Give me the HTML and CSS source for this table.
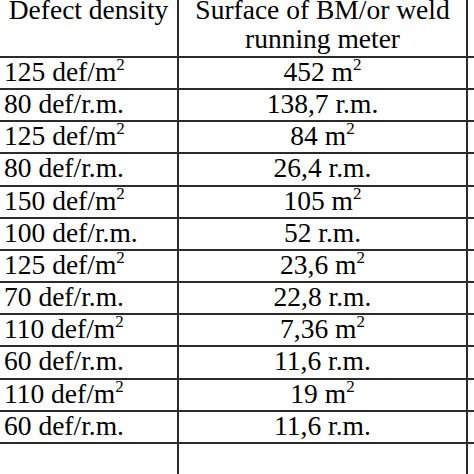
FILE: index.html
```html
<!DOCTYPE html>
<html>
<head>
<meta charset="utf-8">
<link rel="stylesheet" href="styles.css">
</head>
<body>
<div class="sheet">
  <div class="row head">
    <div class="cell c1"><div class="htext">Defect density</div></div>
    <div class="cell c2"><div class="htext">Surface of BM/or weld<br>running meter</div></div>
    <div class="cell c3"></div>
  </div>
  <div class="row"><div class="cell c1">125 def/m<sup>2</sup></div><div class="cell c2">452 m<sup>2</sup></div><div class="cell c3"></div></div>
  <div class="row"><div class="cell c1">80 def/r.m.</div><div class="cell c2">138,7 r.m.</div><div class="cell c3"></div></div>
  <div class="row"><div class="cell c1">125 def/m<sup>2</sup></div><div class="cell c2">84 m<sup>2</sup></div><div class="cell c3"></div></div>
  <div class="row"><div class="cell c1">80 def/r.m.</div><div class="cell c2">26,4 r.m.</div><div class="cell c3"></div></div>
  <div class="row"><div class="cell c1">150 def/m<sup>2</sup></div><div class="cell c2">105 m<sup>2</sup></div><div class="cell c3"></div></div>
  <div class="row"><div class="cell c1">100 def/r.m.</div><div class="cell c2">52 r.m.</div><div class="cell c3"></div></div>
  <div class="row"><div class="cell c1">125 def/m<sup>2</sup></div><div class="cell c2">23,6 m<sup>2</sup></div><div class="cell c3"></div></div>
  <div class="row"><div class="cell c1">70 def/r.m.</div><div class="cell c2">22,8 r.m.</div><div class="cell c3"></div></div>
  <div class="row"><div class="cell c1">110 def/m<sup>2</sup></div><div class="cell c2">7,36 m<sup>2</sup></div><div class="cell c3"></div></div>
  <div class="row"><div class="cell c1">60 def/r.m.</div><div class="cell c2">11,6 r.m.</div><div class="cell c3"></div></div>
  <div class="row"><div class="cell c1">110 def/m<sup>2</sup></div><div class="cell c2">19 m<sup>2</sup></div><div class="cell c3"></div></div>
  <div class="row"><div class="cell c1">60 def/r.m.</div><div class="cell c2">11,6 r.m.</div><div class="cell c3"></div></div>
  <div class="row last"><div class="cell c1"></div><div class="cell c2"></div><div class="cell c3"></div></div>
</div>
</body>
</html>
```
FILE: styles.css
```css
html, body {
  margin: 0;
  padding: 0;
  background: #fff;
}
body {
  width: 474px;
  height: 474px;
  overflow: hidden;
}
.sheet {
  width: 474px;
  font-family: "Liberation Serif", "Times New Roman", serif;
  font-size: 27.5px;
  color: #000;
}
.row {
  display: grid;
  grid-template-columns: 179px 289px 1fr;
  box-sizing: border-box;
  height: 32.17px;
  border-bottom: 2px solid #2b2b2b;
  line-height: 28px;
}
.row.head {
  height: 58px;
  line-height: 29px;
}
.row.last {
  height: 40px;
  border-bottom: none;
}
.cell {
  box-sizing: border-box;
  height: 100%;
  white-space: nowrap;
  overflow: visible;
}
.c1 {
  border-right: 2px solid #2b2b2b;
  padding-left: 4px;
}
.c2 {
  border-right: 2px solid #2b2b2b;
  text-align: center;
}
.head .c1 {
  text-align: center;
  padding-left: 0;
}
.htext {
  margin-top: -5px;
}
sup {
  font-size: 17px;
  line-height: 0;
  vertical-align: 11px;
}
```
